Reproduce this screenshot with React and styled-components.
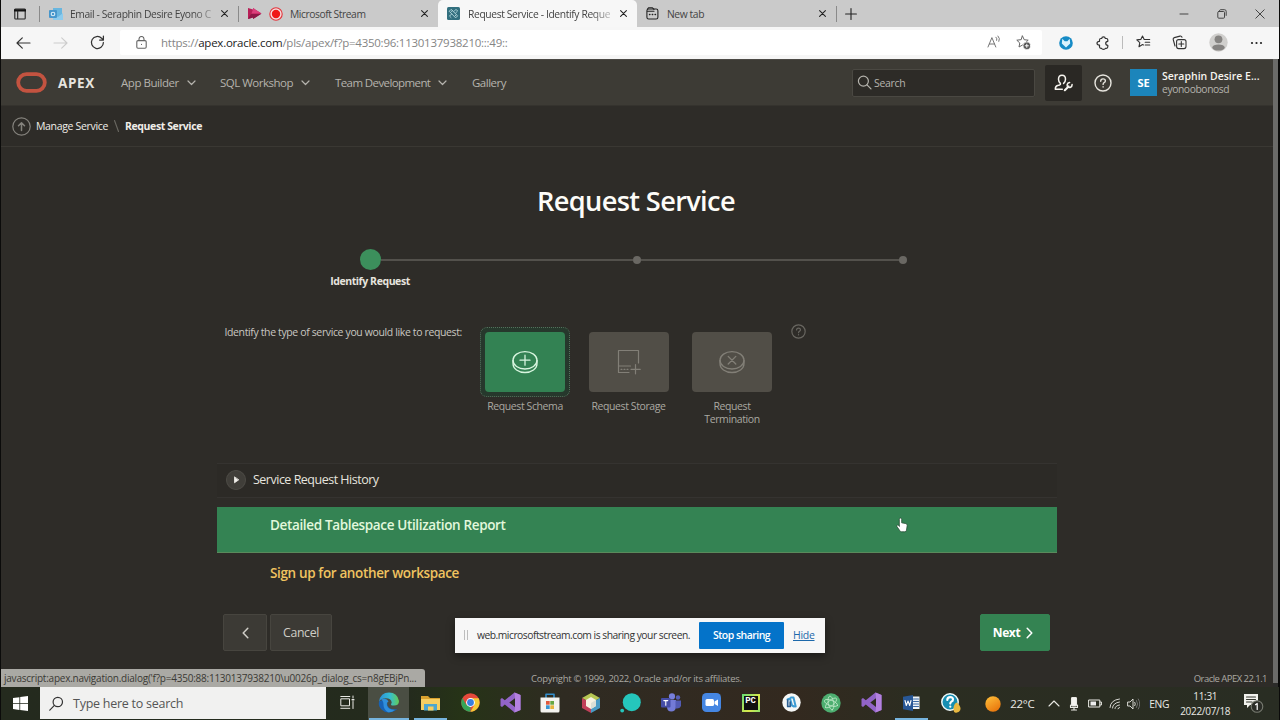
import React from "react";
import styled, { createGlobalStyle } from "styled-components";

const GlobalStyle = createGlobalStyle`
  * { box-sizing: border-box; }
  html, body { margin: 0; padding: 0; background: #000; overflow: hidden; }
  svg { display: block; flex: none; }
`;

const ui = `"Open Sans", "Noto Sans", sans-serif`;

const Screen = styled.div`
  position: relative;
  width: 1280px;
  height: 720px;
  padding: 0 1px;
  display: flex;
  flex-direction: column;
  background: #0b0b0a;
  font-family: ${ui};
  overflow: hidden;
`;

const Label = styled.span`
  display: block;
  white-space: nowrap;
  font-size: ${(p) => p.$size || 11}px;
  font-weight: ${(p) => p.$weight || 400};
  letter-spacing: ${(p) => p.$track || 0}px;
  color: ${(p) => p.$color || "inherit"};
  line-height: ${(p) => p.$line || 14}px;
`;

/* ---------- browser chrome ---------- */
const TabStrip = styled.div`
  display: flex;
  height: 27px;
  flex: none;
  background: #cacaca;
  color: #444;
`;
const TabMenu = styled.div`
  width: 38px;
  display: flex;
  align-items: center;
  padding-left: 13px;
`;
const Tab = styled.div`
  width: ${(p) => p.$width}px;
  display: flex;
  align-items: center;
  padding: 0 10px 0 9px;
  gap: ${(p) => p.$gap || 7}px;
  background: ${(p) => (p.$active ? "#f7f7f7" : "transparent")};
  border-radius: 5px 5px 0 0;
`;
const TabTitle = styled(Label)`
  flex: 1;
  min-width: 0;
  overflow: hidden;
  mask-image: ${(p) => (p.$fade ? "linear-gradient(90deg, #000 85%, rgba(0,0,0,.25))" : "none")};
`;
const Divider = styled.div`
  width: 1px;
  height: ${(p) => p.$height || 16}px;
  background: ${(p) => p.$color || "#8a8a8a"};
  align-self: center;
`;
const NewTabButton = styled.div`
  width: 28px;
  display: flex;
  align-items: center;
  justify-content: center;
`;
const WindowButtons = styled.div`
  margin-left: auto;
  display: flex;
  align-items: center;
`;
const WindowButton = styled.div`
  width: 38px;
  display: flex;
  justify-content: center;
`;
const Toolbar = styled.div`
  display: flex;
  align-items: center;
  height: 32px;
  flex: none;
  padding-bottom: 1px;
  background: #f6f6f6;
  color: #333;
`;
const NavButtons = styled.div`
  width: 119px;
  display: flex;
  align-items: center;
  padding-left: 15px;
  gap: 22px;
`;
const AddressBar = styled.div`
  width: 922px;
  height: 25px;
  display: flex;
  align-items: center;
  background: #fff;
  border-radius: 2px;
  padding: 0 11px 0 16px;
`;
const Url = styled(Label)`
  margin-left: 14px;
  flex: 1;
  color: #858585;
  b { font-weight: 400; color: #222; }
`;
const AddressActions = styled.div`
  display: flex;
  gap: 15px;
`;
const ToolbarIcon = styled.div`
  width: ${(p) => p.$width || 38}px;
  display: flex;
  justify-content: center;
`;

/* ---------- page ---------- */
const Viewport = styled.div`
  display: flex;
  flex: none;
  height: 628px;
`;
const Page = styled.div`
  width: 1272px;
  display: flex;
  flex-direction: column;
  background: #2e2c28;
  color: #e6e4df;
`;
const ScrollTrack = styled.div`
  width: 5px;
  height: 628px;
  background: #2b2b29;
`;
const ScrollThumb = styled.div`
  height: 624px;
  background: #6b6b69;
`;
const AppHeader = styled.header`
  display: flex;
  align-items: center;
  height: 47px;
  flex: none;
  background: #3d3b35;
  border-top: 1px solid #4b4945;
  border-bottom: 1px solid #35332e;
  padding-left: 15px;
`;
const Brand = styled.div`
  display: flex;
  align-items: center;
  width: 105px;
  gap: 11px;
`;
const Menu = styled.nav`
  display: flex;
  color: #b5b3ad;
`;
const MenuItem = styled.div`
  display: flex;
  align-items: center;
  justify-content: space-between;
  width: ${(p) => p.$width}px;
  margin-right: ${(p) => p.$after || 0}px;
`;
const SearchBox = styled.div`
  margin-left: auto;
  width: 183px;
  height: 28px;
  display: flex;
  align-items: center;
  gap: 2px;
  padding-left: 4px;
  border: 1px solid #4a4842;
  border-radius: 2px;
  background: #2d2b27;
  color: #b5b3ad;
`;
const AdminButton = styled.div`
  width: 37px;
  height: 36px;
  margin: 0 12px 0 10px;
  display: flex;
  align-items: center;
  justify-content: center;
  border-radius: 2px;
  background: #2a2824;
`;
const Account = styled.div`
  display: flex;
  align-items: center;
  gap: 5px;
  width: 143px;
  margin-left: 18px;
`;
const Avatar = styled.div`
  width: 27px;
  height: 27px;
  display: flex;
  align-items: center;
  justify-content: center;
  background: #1c85bb;
  color: #fff;
`;
const Breadcrumb = styled.div`
  display: flex;
  align-items: center;
  height: 41px;
  flex: none;
  border-bottom: 1px solid #3a3833;
  padding-left: 11px;
  gap: 5px;
  color: #f0eee9;
`;
const Content = styled.main`
  width: 840px;
  margin-left: 216px;
  display: flex;
  flex-direction: column;
  flex: 1;
`;
const Title = styled.h1`
  margin: 36px 2px 0 0;
  height: 36px;
  text-align: center;
  font-size: 27.2px;
  font-weight: 600;
  line-height: 36px;
  letter-spacing: -0.65px;
  color: #fdfcf8;
`;
const Progress = styled.div`
  margin: 30px 0 0 143px;
  width: 547px;
  height: 21px;
  display: flex;
  align-items: center;
`;
const Dot = styled.div`
  width: ${(p) => (p.$current ? 21 : 8)}px;
  height: ${(p) => (p.$current ? 21 : 8)}px;
  border-radius: 50%;
  background: ${(p) => (p.$current ? "#3c8f5c" : "#6a6863")};
`;
const Rail = styled.div`
  width: ${(p) => p.$width}px;
  height: 2px;
  background: #53514c;
`;
const StepLabel = styled.div`
  width: 120px;
  margin: 4px 0 0 93px;
  display: flex;
  justify-content: center;
`;
const ServiceRow = styled.div`
  display: flex;
  align-items: flex-start;
  margin-top: 39px;
  height: 136px;
`;
const ServiceLabel = styled.div`
  width: 245px;
  margin-right: 18px;
  margin-top: -2px;
  display: flex;
  justify-content: flex-end;
`;
const Options = styled.div`
  display: flex;
  gap: 13.5px;
`;
const Option = styled.div`
  width: 90px;
  display: flex;
  flex-direction: column;
  align-items: center;
  text-align: center;
  color: #aaa8a1;
`;
const OptionFrame = styled.div`
  padding: 4px;
  margin-bottom: 3px;
  border: 1px dotted ${(p) => (p.$selected ? "#55705c" : "transparent")};
  border-radius: 7px;
  background: ${(p) => (p.$selected ? "#26382c" : "transparent")};
`;
const OptionTile = styled.div`
  width: 80px;
  height: 60px;
  display: flex;
  align-items: center;
  justify-content: center;
  border-radius: 4px;
  background: ${(p) => (p.$selected ? "#338253" : "#514e47")};
  color: ${(p) => (p.$selected ? "#d8f5df" : "#827f77")};
`;
const HelpSlot = styled.div`
  margin: -3px 0 0 14px;
`;
const History = styled.section`
  height: 35px;
  display: flex;
  align-items: center;
  padding: 0 0 2px 9px;
  gap: 7px;
  border-top: 1px solid #353330;
  border-bottom: 1px solid #353330;
  background: #2c2a26;
`;
const LinkRow = styled.div`
  height: ${(p) => (p.$hover ? 46 : 47)}px;
  margin-top: ${(p) => p.$gap}px;
  padding: 9px 0 0 53px;
  background: ${(p) => (p.$hover ? "#348353" : "transparent")};
  border-bottom: ${(p) => (p.$hover ? "1px solid #5a8a5c" : "none")};
`;
const Actions = styled.div`
  display: flex;
  align-items: center;
  margin-top: 12px;
  padding: 0 7px 0 6px;
  gap: 3px;
`;
const Button = styled.div`
  width: ${(p) => p.$width}px;
  height: 37px;
  margin-left: ${(p) => (p.$primary ? "auto" : "0")};
  padding: ${(p) => (p.$primary ? "0 4px 0 0" : "0")};
  display: flex;
  align-items: center;
  justify-content: center;
  gap: 6px;
  border-radius: 2px;
  border: 1px solid ${(p) => (p.$primary ? "#348352" : "#47453f")};
  background: ${(p) => (p.$primary ? "#348352" : "#3c3a35")};
  color: ${(p) => (p.$primary ? "#fff" : "#cfcdc7")};
`;
const Footer = styled.footer`
  height: 19px;
  flex: none;
  display: flex;
  justify-content: space-between;
  padding: 4px 6px 0 530px;
  color: #aaa8a2;
`;

/* ---------- overlays ---------- */
const ShareBar = styled.div`
  position: absolute;
  left: 455px;
  top: 618px;
  width: 370px;
  height: 35px;
  display: flex;
  align-items: center;
  padding: 0 0 1px 9px;
  background: #f7f7f7;
  color: #333;
  box-shadow: 0 3px 8px rgba(0, 0, 0, 0.4);
`;
const Grip = styled.div`
  width: 4px;
  height: 10px;
  margin-right: 9px;
  border: solid #bdbdbd;
  border-width: 0 1px;
`;
const ShareText = styled.div`
  width: 222px;
`;
const StopButton = styled.div`
  width: 85px;
  height: 27px;
  margin-right: 9px;
  display: flex;
  align-items: center;
  justify-content: center;
  border-radius: 1px;
  background: #0473c9;
  color: #fff;
`;
const HideLink = styled(Label)`
  text-decoration: underline;
  color: #1d69ab;
`;
const StatusBubble = styled.div`
  position: absolute;
  left: 1px;
  top: 669px;
  width: 424px;
  height: 18px;
  display: flex;
  align-items: center;
  padding-left: 3px;
  border-radius: 0 3px 0 0;
  background: #aaa9a4;
  color: #3a3934;
`;
const Pointer = styled.div`
  position: absolute;
  left: 896px;
  top: 517px;
`;

/* ---------- taskbar ---------- */
const Taskbar = styled.div`
  display: flex;
  height: 33px;
  flex: none;
  background: linear-gradient(90deg, #242a1e 0%, #242b1d 32%, #263317 36%, #2f2b22 44%, #33291f 62%, #2b2d21 72%, #292d23 100%);
  color: #e9e9e4;
`;
const StartCell = styled.div`
  width: 39px;
  display: flex;
  align-items: center;
  padding-left: 12px;
`;
const TaskSearch = styled.div`
  width: 286px;
  height: 32px;
  display: flex;
  align-items: center;
  padding: 1px 0 0 9px;
  gap: 9px;
  background: #f1f1f0;
  color: #555;
`;
const TaskApp = styled.div`
  width: ${(p) => p.$width || 40.1}px;
  height: 33px;
  display: flex;
  align-items: center;
  justify-content: center;
  padding-left: ${(p) => p.$shift || 0}px;
  background: ${(p) => (p.$active ? "#4a4e43" : "transparent")};
`;
const TaskAppInner = styled.div`
  width: ${(p) => (p.$active ? 40 : 33)}px;
  height: 33px;
  display: flex;
  align-items: center;
  justify-content: center;
  border-bottom: 2px solid ${(p) => (p.$open ? "#76b4de" : "transparent")};
`;
const Tray = styled.div`
  flex: 1;
  display: flex;
  align-items: center;
  padding-left: 14px;
`;
const TrayItem = styled.div`
  width: ${(p) => p.$width}px;
  display: flex;
`;
const Clock = styled.div`
  width: 56px;
  display: flex;
  flex-direction: column;
  align-items: center;
  margin-left: 6px;
`;
const Notice = styled.div`
  margin-left: 11px;
`;

/* ---------- drawings ---------- */
const Svg = ({ w = 16, h = w, box = "0 0 16 16", sw = 1.1, children }) => (
  <svg width={w} height={h} viewBox={box} fill="none" stroke="currentColor" strokeWidth={sw} strokeLinecap="round" strokeLinejoin="round">
    {children}
  </svg>
);
const CloseX = () => <Svg w={7} box="0 0 7 7" sw={1.1}><path d="M.6.6 6.4 6.4M6.4.6.6 6.4" stroke="#222" /></Svg>;
const Chevron = () => <Svg w={9} h={6} box="0 0 9 6" sw={1.2}><path d="m1 1 3.5 3.5L8 1" /></Svg>;
const Vertical = () => (
  <Svg w={12} box="0 0 12 12"><rect x=".8" y="1" width="10.4" height="10" rx=".8" stroke="#222" /><path d="M1 2.4h10" stroke="#111" strokeWidth="2.4" /><path d="M3.7 3v7.5" stroke="#222" /></Svg>
);
const OutlookLogo = () => (
  <Svg w={14} h={12} box="0 0 14 12"><g stroke="none"><rect x="4" y="0" width="9" height="9" fill="#69b6df" /><path d="M4 6 9 9l5-4v7H4z" fill="#8dcbed" /><rect y="2" width="8" height="8" rx="1" fill="#4796cb" /></g><circle cx="4" cy="6" r="1.8" stroke="#d9edf8" /></Svg>
);
const StreamLogo = () => (
  <Svg w={14} h={13} box="0 0 14 13"><g stroke="none"><path d="M0 1 5 2.500V1L13.500 6.500 5 12V10.500L0 12z" fill="#b81f57" /><path d="M5 1 13.500 6.500H3.500L5 2.500z" fill="#dc3f7c" /><path d="M0 12 3 7h10L5 12v-1.500z" fill="#8e1747" /></g></Svg>
);
const RecordDot = () => <Svg w={14} box="0 0 14 14"><circle cx="7" cy="7" r="6.2" stroke="#e3333a" fill="#f4dcdc" /><circle cx="7" cy="7" r="4.2" stroke="none" fill="#f01616" /></Svg>;
const ApexFavicon = () => (
  <Svg w={13} box="0 0 13 13" sw={0.9}><rect width="13" height="13" rx="1.5" fill="#326f7e" stroke="none" /><path d="m2.5 4 1.6-1.6 6.5 6.4-1.7 1.8zM4 10.5l-1.5-1.4 2-2M8.6 6l2-2L9 2.4l-2 2M4.5 4.5l1-1M8 9l1-1" stroke="#b9dbe0" /></Svg>
);
const NewTabIcon = () => <Svg w={13} box="0 0 13 13"><rect x=".9" y="2" width="11" height="10" rx="1.8" stroke="#222" /><path d="M1.5 2 2.5.8h4L8 2.4M8 4.200H1.500" stroke="#222" /><path d="M3.5 7.500h.4M6.3 7.500h.4M9.1 7.500h.4" stroke="#222" strokeWidth="1.4" /></Svg>;
const PlusIcon = () => <Svg w={12} box="0 0 12 12"><path d="M6 .6v10.8M.6 6h10.8" stroke="#222" /></Svg>;
const Back = () => <Svg w={15} h={12} box="0 0 15 12" sw={1.2}><path d="M14 6H1M6.3.9 1 6l5.3 5.1" /></Svg>;
const Forward = () => <Svg w={15} h={12} box="0 0 15 12" sw={1.1}><path d="M1 6h13M8.7.9 14 6l-5.3 5.1" stroke="#ccc" /></Svg>;
const Reload = () => <Svg w={15} box="0 0 15 15" sw={1.25}><path d="M13.400 7.500A6 6 0 1 1 11.600 3.200L13.200 5M13.400 1v4H9.600" /></Svg>;
const LockIcon = () => <Svg w={11} h={13} box="0 0 11 13"><rect x=".8" y="4.6" width="9.4" height="7.6" rx="1.2" stroke="#666" /><path d="M3 4.5V3a2.5 2.5 0 0 1 5 0v1.5M5.5 8.2v.3" stroke="#666" /></Svg>;
const ReadAloud = () => <Svg w={14} box="0 0 14 14" sw={1}><path d="M1 12 4.9 2.6 8.8 12M2.3 9h5.2M9 2.2q1.6 1.5.7 3.2M11 1q2.5 2.5.9 5.4" stroke="#777" /></Svg>;
const starPath = "M6.5 1 8.2 4.7l4 .5-3 2.8.8 4-3.5-2L3 12l.8-4-3-2.8 4-.5z";
const StarAdd = () => <Svg w={15} box="0 0 15 15" sw={1}><path d={starPath} stroke="#666" /><circle cx="10.8" cy="10.8" r="3.7" fill="#555" stroke="#fff" strokeWidth=".6" /><path d="M9.2 10.8h3.2M10.8 9.2v3.2" stroke="#fff" /></Svg>;
const FoxBadge = () => <Svg w={14} box="0 0 14 14"><circle cx="7" cy="7" r="6.8" fill="#168bc6" stroke="none" /><path d="M3.300 2.800 5.700 5.200h2.600l2.400-2.400.5 4.700L7 11.500 2.800 7.500z" fill="#d9f3fd" stroke="none" /></Svg>;
const Puzzle = () => <Svg w={14} box="0 0 14 14" sw={1.2}><path d="M11.800 5.300V3.900q0-1.400-1.400-1.400H9.300Q9.200.8 7.500.8T5.700 2.500H4.900q-1.400 0-1.400 1.400v1.400Q1 5.400 1 7.200t2.500 1.900v1.700q0 1.500 1.400 1.500h.8q.2 1 1.800 1t1.800-1h1.100q1.400 0 1.400-1.500V9.300Q9.700 9.200 9.700 7.300t2.100-2z" /></Svg>;
const Favorites = () => <Svg w={15} box="0 0 15 15" sw={1.1}><path d="m7.5 10-1-.5L3 11.7l.8-4-3-2.8 4-.5L6.5 1l1.7 3.5h5.5M9.2 7.3h4.5M9.2 10h4.5" /></Svg>;
const Collections = () => <Svg w={15} box="0 0 15 15" sw={1.1}><rect x="4.6" y="4.6" width="9.4" height="9" rx="2" /><path d="M9.3 6.5v5M6.8 9h5M3 11 1.2 4.5Q.9 3 2.3 2.6L8 1.1q1.5-.3 2 1.1" /></Svg>;
const Person = () => <Svg w={19} box="0 0 19 19"><circle cx="9.5" cy="9.5" r="9.2" fill="#d0cfcd" stroke="none" /><circle cx="9.5" cy="6.3" r="3.9" fill="#858381" stroke="none" /><ellipse cx="9.5" cy="14.5" rx="6.2" ry="3.1" fill="#858381" stroke="none" /></Svg>;
const More = () => <Svg w={13} h={4} box="0 0 13 4"><g fill="#222" stroke="none"><circle cx="2" cy="2" r="1.1" /><circle cx="6.5" cy="2" r="1.1" /><circle cx="11" cy="2" r="1.1" /></g></Svg>;
const OracleLogo = () => <Svg w={31} h={21} box="0 0 31 21"><rect x="2.2" y="2.2" width="26.6" height="16.6" rx="8.3" stroke="#c35340" strokeWidth="3.8" /></Svg>;
const Magnifier = () => <Svg w={15} box="0 0 15 15" sw={1.2}><circle cx="6.4" cy="6.1" r="5" /><path d="m10 9.8 4 4" /></Svg>;
const AdminIcon = () => (
  <Svg w={19} h={18} box="0 0 19 18" sw={1.5}>
    <path d="M9.600 9.400q1.900-1.600 1.900-4.100 0-4-3.500-4T4.500 5.300q0 2.500 1.900 4.100v.9q-.6.9-2.800 1.200-2.300.6-2.300 3.700h7" stroke="#f7f5ef" />
    <path d="m10.800 16.200 3.800-3.800" stroke="#f7f5ef" strokeWidth="2.100" />
    <path d="M15.600 8.600q-2 .2-2.400 1.900t.8 2.500 2.600.3 1.500-2.700" stroke="#f7f5ef" strokeWidth="1.500" />
  </Svg>
);
const Question = ({ size = 18, color = "#e7e5de", sw = 1.4 }) => <Svg w={size} box="0 0 18 18" sw={sw}><circle cx="9" cy="9" r="8" stroke={color} /><path d="M6.7 7.2q0-2.3 2.3-2.3t2.4 1.9q0 1.2-1.3 1.8-1 .5-1 1.8M9.1 12.8v.2" stroke={color} /></Svg>;
const UpCircle = () => <Svg w={19} box="0 0 19 19" sw={1.2}><circle cx="9.5" cy="9.5" r="8.7" stroke="#85837d" /><path d="M9.5 13.5V6M6.5 8.7l3-3 3 3" stroke="#85837d" strokeWidth="1.5" /></Svg>;
const Slash = () => <Svg w={7} h={14} box="0 0 7 14"><path d="m1.500 1.500 4 11" stroke="#6a6862" /></Svg>;
const Disc = ({ x }) => (
  <Svg w={26} h={24} box="0 0 26 24" sw={1.3}><ellipse cx="13" cy="10.3" rx="12" ry="8.7" /><path d="M1 10.3v3.4c0 4.9 5.3 8.8 12 8.8s12-3.9 12-8.8v-3.4" />{x ? <path d="m9.2 6.4 7.6 7.6m0-7.6L9.2 14" /> : <path d="M13 5.2v10M8 10.2h10" />}</Svg>
);
const Storage = () => <Svg w={24} h={26} box="0 0 24 26" sw={1.2}><path d="M21.5 14V1.5H1.5v22H12M1.5 17h12M4 20.3h1M7 20.3h1M10 20.3h1M18.5 15.5v9.3M14 20.3h9.3" /></Svg>;
const PlayCircle = () => <Svg w={20} box="0 0 20 20"><circle cx="10" cy="10" r="9.5" fill="#403e39" stroke="#4a4843" /><path d="M8.500 7.200v5.600l4-2.800z" fill="#f1efea" stroke="#f1efea" strokeWidth=".8" /></Svg>;
const Angle = ({ left }) => <Svg w={7} h={12} box="0 0 7 12" sw={1.5}><path d={left ? "M5.8 1.2 1.2 6l4.6 4.8" : "M1.2 1.2 5.8 6l-4.6 4.8"} /></Svg>;
const Hand = () => <Svg w={12} h={16} box="0 0 12 16"><path d="M3.3 9V2.3q.1-1.3 1.2-1.3t1.2 1.3v3.5l4.2.8q1.5.4 1.3 2l-.7 4.6q-.3 1.6-1.7 1.6H5.5q-1 0-1.8-1.3L1 9.7Q.4 8.4 1.3 8q.9-.2 2 1z" fill="#fff" stroke="#254d34" strokeWidth=".8" /></Svg>;

/* taskbar marks */
const WindowsLogo = () => <Svg w={15} box="0 0 15 15"><path d="M0 2 6.4 1.2v6H0zM7.2 1 15 0v7.2H7.2zM0 7.9h6.4v6L0 13zM7.2 7.9H15V15l-7.8-1z" fill="#fff" stroke="none" /></Svg>;
const TaskSearchIcon = () => <Svg w={15} box="0 0 15 15" sw={1.2}><circle cx="8.8" cy="6" r="4.7" stroke="#333" /><path d="m5.4 9.4-4.6 4.8" stroke="#333" /></Svg>;
const TaskView = () => <Svg w={15} box="0 0 15 15" sw={1}><path d="M1.2 3.8h8.3v7H1.2zM.8 1.5h9M.8 13.3h9M13 1v2M13 6.5v7" /><path d="M12.2 4.7h1.6" strokeWidth="1.6" /></Svg>;
const Edge = () => (
  <Svg w={22} h={21} box="0 0 22 21">
    <defs>
      <linearGradient id="edgeTop" x1="0" x2="1"><stop stopColor="#2a8fd8" /><stop offset=".55" stopColor="#36bdd0" /><stop offset="1" stopColor="#63cc55" /></linearGradient>
    </defs>
    <g stroke="none">
      <path d="M1 9.500Q0 14 3.500 17.500T12 20.500q4.500-.4 7.500-3.700-4.500 1.700-8-.8-2.600-2-2.300-5Q6 6.500 1 9.500z" fill="#1762b5" />
      <path d="M3 7.500Q9 5.500 10.500 9.500 8.300 10.500 9 13.500q1.500 4.500 8 4.300-3 2.900-7 2.500Q5.500 17.500 5.500 13T3 7.500z" fill="#2f8fdc" />
      <path d="M1 9.500Q2.500.6 11 .5q8.500.2 10 8.500 0 4.500-5 4.600-3 0-3-1.200c0-.7.7-.9.700-2.200Q13 6.500 8 6.300 3.500 6.300 1 9.500z" fill="url(#edgeTop)" />
    </g>
  </Svg>
);
const Folder = () => <Svg w={19} h={16} box="0 0 19 16"><g stroke="none"><path d="M0 1h7l2 2h10v12H0z" fill="#d9a22f" /><path d="M0 4h19v11H0z" fill="#f6ce62" /><path d="M3 9h13v6.5H3z" fill="#4ca6cf" /><path d="M7 11.500h5.500v4H7z" fill="#f6ce62" /></g></Svg>;
const Chrome = () => <Svg w={19} box="0 0 19 19"><g stroke="none"><circle cx="9.5" cy="9.5" r="9.3" fill="#e5493b" /><path d="M1.4 4.9 5.500 12l4 0 0 6.800A9.3 9.3 0 0 1 1.4 4.900z" fill="#36a558" /><path d="M9.5 5.3h8.1A9.3 9.3 0 0 1 9.5 18.800L13.3 12z" fill="#f6ca36" /><circle cx="9.5" cy="9.5" r="4.4" fill="#fff" /><circle cx="9.5" cy="9.5" r="3.4" fill="#397fe1" /></g></Svg>;
const VisualStudio = () => <Svg w={21} box="0 0 21 21"><g stroke="none"><path d="M14.5.5 20.5 3v15l-6 2.5L4.8 12.4 2 15 .5 14V7L2 6l2.8 2.3zM15 6.2 9.3 10.5 15 15z" fill="#9264c7" fillRule="evenodd" /><path d="m14.5.5 6 2.5v15l-6 2.5.5-5.5V6z" fill="#b481df" /></g></Svg>;
const Store = () => <Svg w={20} h={20} box="0 0 20 20"><path d="M6 5V1.2h8V5" stroke="#338ecb" strokeWidth="1.6" /><path d="M.5 4.500h19V18q0 1.500-1.500 1.500H2Q.5 19.500.5 18z" fill="#f4f3ef" stroke="none" /><g stroke="none"><rect x="6" y="8" width="3.7" height="3.7" fill="#df593b" /><rect x="10.3" y="8" width="3.7" height="3.7" fill="#67a743" /><rect x="6" y="12.3" width="3.7" height="3.7" fill="#3695d2" /><rect x="10.3" y="12.3" width="3.7" height="3.7" fill="#e7b43d" /></g></Svg>;
const NetBeans = () => <Svg w={20} box="0 0 20 20"><g stroke="none"><path d="m10 0 9 5-9 5-9-5z" fill="#b6c653" /><path d="m1 5 9 5v10l-9-5z" fill="#c04059" /><path d="m19 5-9 5v10l9-5z" fill="#4a9bc4" /><path d="m10 4 5 3v6l-5 3-5-3V7z" fill="#f6f2e3" /><path d="m10 10 5-3v6l-5 3z" fill="#dadfd6" /></g></Svg>;
const TealBubble = () => <Svg w={21} h={20} box="0 0 21 20"><g fill="#25c6bc" stroke="none"><circle cx="11.8" cy="9.2" r="9" /><circle cx="2.2" cy="17.6" r="1.9" /></g></Svg>;
const Teams = () => <Svg w={20} h={19} box="0 0 20 19"><g stroke="none"><circle cx="11" cy="3.4" r="3.1" fill="#777fdc" /><circle cx="17" cy="4.5" r="2.2" fill="#555eb5" /><path d="M6 7h9v7q-.6 4.500-4.700 4.500T6 14z" fill="#737bd6" /><path d="M14.500 7.500H20v5q-.500 3.500-5.500 3z" fill="#525bb3" /><rect y="5" width="9.500" height="9.500" rx="1" fill="#454da6" /></g><path d="M2.800 7.600h4M4.800 7.600v4.600" stroke="#fff" /></Svg>;
const Zoom = () => <Svg w={19} box="0 0 19 19"><g stroke="none"><rect width="19" height="19" rx="4.500" fill="#4586e2" /><rect x="3.500" y="6" width="8.500" height="7" rx="1.500" fill="#fff" /><path d="m12.500 8.500 3.500-2v6.500l-3.500-2z" fill="#fff" /></g></Svg>;
const PyFrame = styled.div`
  width: 18px;
  height: 18px;
  padding: 2px;
  background: linear-gradient(125deg, #62dc74, #dce84b 60%, #8de36c);
`;
const PyFace = styled.div`
  height: 14px;
  padding-left: 1px;
  background: #101010;
  color: #fff;
  font: 700 9px/10px "Liberation Mono", monospace;
`;
const PyCharm = () => <PyFrame><PyFace>PC</PyFace></PyFrame>;
const AndroidStudio = () => <Svg w={19} box="0 0 19 19"><circle cx="9.500" cy="9.500" r="9.200" fill="#f5f7f6" stroke="none" /><path d="M5.500 6.500 8 5.500l2 7 2 1M9 4.500h2.500l2.200 9" stroke="#3c9bd3" strokeWidth="2" /><path d="M5.700 7v6.500h2.500V9" stroke="#2c5f92" strokeWidth="1.700" /></Svg>;
const Atom = () => <Svg w={20} box="0 0 20 20" sw={0.8}><circle cx="10" cy="10" r="9.700" fill="#4dae70" stroke="none" /><g stroke="#bfe8c9"><ellipse cx="10" cy="10" rx="7" ry="2.700" transform="rotate(20 10 10)" /><ellipse cx="10" cy="10" rx="7" ry="2.700" transform="rotate(80 10 10)" /><ellipse cx="10" cy="10" rx="7" ry="2.700" transform="rotate(140 10 10)" /></g></Svg>;
const Word = () => <Svg w={17} h={16} box="0 0 17 16"><rect x="7" y="1.500" width="9.500" height="12.500" fill="#eef3f8" stroke="none" /><path d="M10.500 4h5M10.500 6.500h5M10.500 9h5M10.500 11.500h5" stroke="#3968a4" /><path d="m0 1.800 10-1.800v16L0 14.200z" fill="#285796" stroke="none" /><path d="m2 5.500 1.300 5L5 6l1.700 4.500L8 5.500" stroke="#fff" /></Svg>;
const HelpApp = () => <Svg w={20} box="0 0 20 20"><circle cx="9" cy="9" r="8.200" fill="#168eb2" stroke="#eef8f8" strokeWidth="1.500" /><path d="M6.300 7q0-2.900 2.900-2.900T12 6.600q0 1.500-1.800 2.200-.9.600-.9 1.800M9.300 13.500v.2" stroke="#fff" strokeWidth="2.200" /><path d="M16 9.500q3.500 3.500 3.500 6.200T16 19.500t-3.500-3.800T16 9.500z" fill="#e8b841" stroke="none" /></Svg>;
const Sun = () => <Svg w={16} box="0 0 16 16"><defs><linearGradient id="sun" x1="0" x2=".6" y2="1"><stop stopColor="#ffc13b" /><stop offset="1" stopColor="#e9780e" /></linearGradient></defs><circle cx="8" cy="8" r="7.700" fill="url(#sun)" stroke="none" /></Svg>;
const TrayUp = () => <Svg w={12} h={7} box="0 0 12 7" sw={1.100}><path d="m1 6 5-5 5 5" /></Svg>;
const Mic = () => <Svg w={10} h={14} box="0 0 10 14"><rect x="2.500" y=".500" width="5" height="8.500" rx="1" fill="#f4f4f0" /><path d="M1.500 8v2.500h7V8M5 10.500v2.500M2.500 13h5" /></Svg>;
const Battery = () => <Svg w={14} h={9} box="0 0 14 9" sw={1}><path d="M1 1h10.800v7H1zM12 3h1.400v3H12" /><path d="M2.500 2.500H8v4H2.500z" fill="#eee" stroke="none" /></Svg>;
const Wifi = () => <Svg w={12} box="0 0 12 12" sw={0.900}><path d="M1 9.500Q1.500 2 10.500 1M3.500 10q.3-5 7-6M6 10.500q.4-3 4.500-3.500M9 10.800q.2-1.100 1.500-1.300" /></Svg>;
const Speaker = () => <Svg w={13} h={12} box="0 0 13 12" sw={0.900}><path d="M1 4h2l3-3v10L3 8H1zM7.800 4.300q1.200 1.700 0 3.400" /><path d="M9.500 2.500q2.400 3.500 0 7M11.300 1q3 5 0 10" stroke="#777" /></Svg>;
const NoticeIcon = () => <Svg w={20} h={21} box="0 0 20 21"><path d="M0 1h14v11H6l-3 3v-3H0z" fill="#f1f1ed" stroke="none" /><path d="M2.500 4h9M2.500 6.500h9M2.500 9H8" stroke="#34372e" /><circle cx="13" cy="13.500" r="5.800" fill="#2b2d27" stroke="#777a70" /><path d="m11.500 11.700 1.700-1.200v6" stroke="#fff" strokeWidth="1.200" /></Svg>;

const apps = [
  { Icon: TaskView, width: 42 },
  { Icon: Edge, width: 41, active: true, open: true },
  { Icon: Folder, width: 41, shift: 1, open: true },
  { Icon: Chrome }, { Icon: VisualStudio, shift: 1 }, { Icon: Store }, { Icon: NetBeans, shift: 1 }, { Icon: TealBubble },
  { Icon: Teams }, { Icon: Zoom, shift: 1 }, { Icon: PyCharm, shift: 1 }, { Icon: AndroidStudio, shift: 1 }, { Icon: Atom, shift: 1 },
  { Icon: VisualStudio, shift: 1 }, { Icon: Word, shift: 1, open: true }, { Icon: HelpApp },
];

function BrowserChrome() {
  return (
    <>
      <TabStrip>
        <TabMenu><Vertical /></TabMenu>
        <Divider />
        <Tab $width={198}>
          <OutlookLogo />
          <TabTitle $size={10.3} $track={-0.38} $fade>Email - Seraphin Desire Eyono C</TabTitle>
          <CloseX />
        </Tab>
        <Divider />
        <Tab $width={199}>
          <StreamLogo /><RecordDot />
          <TabTitle $size={10.3} $track={-0.45}>Microsoft Stream</TabTitle>
          <CloseX />
        </Tab>
        <Tab $width={199} $gap={8} $active>
          <ApexFavicon />
          <TabTitle $size={10.3} $track={-0.37} $fade>Request Service - Identify Reque</TabTitle>
          <CloseX />
        </Tab>
        <Tab $width={199} $gap={8}>
          <NewTabIcon />
          <TabTitle $size={10.3} $track={-0.4}>New tab</TabTitle>
          <CloseX />
        </Tab>
        <Divider />
        <NewTabButton><PlusIcon /></NewTabButton>
        <WindowButtons>
          <WindowButton><Svg w={10} box="0 0 10 10" sw={1}><path d="M1 5h8" /></Svg></WindowButton>
          <WindowButton><Svg w={10} box="0 0 10 10" sw={1}><rect x=".8" y="2.500" width="6.700" height="6.700" rx="1" /><path d="M2.500 1.500q.3-.8 1-.8h4q1.700 0 1.700 1.700v4" /></Svg></WindowButton>
          <WindowButton><Svg w={10} box="0 0 10 10" sw={1}><path d="m.8.8 8.400 8.400m0-8.400L.8 9.200" /></Svg></WindowButton>
        </WindowButtons>
      </TabStrip>
      <Toolbar>
        <NavButtons><Back /><Forward /><Reload /></NavButtons>
        <AddressBar>
          <LockIcon />
          <Url $size={11.5} $track={-0.25}>https://<b>apex.oracle.com</b>/pls/apex/f?p=4350:96:1130137938210:::49::</Url>
          <AddressActions><ReadAloud /><StarAdd /></AddressActions>
        </AddressBar>
        <ToolbarIcon $width={47}><FoxBadge /></ToolbarIcon>
        <ToolbarIcon $width={28}><Puzzle /></ToolbarIcon>
        <ToolbarIcon $width={11}><Divider $height={13} $color="#bbb" /></ToolbarIcon>
        <ToolbarIcon $width={30}><Favorites /></ToolbarIcon>
        <ToolbarIcon $width={43}><Collections /></ToolbarIcon>
        <ToolbarIcon $width={34}><Person /></ToolbarIcon>
        <ToolbarIcon $width={43}><More /></ToolbarIcon>
      </Toolbar>
    </>
  );
}

function Header() {
  return (
    <AppHeader>
      <Brand><OracleLogo /><Label $size={13.5} $weight={700} $track={0.6}>APEX</Label></Brand>
      <Menu>
        <MenuItem $width={75} $after={24}><Label $size={11.5} $track={-0.45}>App Builder</Label><Chevron /></MenuItem>
        <MenuItem $width={90} $after={25}><Label $size={11.5} $track={-0.5}>SQL Workshop</Label><Chevron /></MenuItem>
        <MenuItem $width={112} $after={25}><Label $size={11.5} $track={-0.6}>Team Development</Label><Chevron /></MenuItem>
        <MenuItem $width={40}><Label $size={11.5} $track={-0.5}>Gallery</Label></MenuItem>
      </Menu>
      <SearchBox><Magnifier /><Label $size={10.5} $track={-0.3}>Search</Label></SearchBox>
      <AdminButton><AdminIcon /></AdminButton>
      <Question />
      <Account>
        <Avatar><Label $size={11} $weight={700}>SE</Label></Avatar>
        <div>
          <Label $size={10.5} $weight={600} $color="#f6f4ef">Seraphin Desire E...</Label>
          <Label $size={10.3} $track={-0.4} $color="#b5b3ad" $line={13}>eyonoobonosd</Label>
        </div>
      </Account>
    </AppHeader>
  );
}

const services = [
  { lines: ["Request Schema"], icon: <Disc />, selected: true },
  { lines: ["Request Storage"], icon: <Storage /> },
  { lines: ["Request", "Termination"], icon: <Disc x /> },
];

function Wizard() {
  return (
    <Content>
      <Title>Request Service</Title>
      <Progress><Dot $current /><Rail $width={251.5} /><Dot /><Rail $width={258.5} /><Dot /></Progress>
      <StepLabel><Label $size={10.5} $weight={700} $track={-0.42}>Identify Request</Label></StepLabel>
      <ServiceRow>
        <ServiceLabel><Label $size={10.5} $track={-0.37} $color="#c9c7c1">Identify the type of service you would like to request:</Label></ServiceLabel>
        <Options>
          {services.map((s) => (
            <Option key={s.lines.join(" ")}>
              <OptionFrame $selected={s.selected}><OptionTile $selected={s.selected}>{s.icon}</OptionTile></OptionFrame>
              {s.lines.map((t) => <Label key={t} $size={10.5} $track={-0.4} $line={13.4}>{t}</Label>)}
            </Option>
          ))}
        </Options>
        <HelpSlot><Question size={15} color="#696761" sw={1.4} /></HelpSlot>
      </ServiceRow>
      <History><PlayCircle /><Label $size={12.5} $track={-0.5}>Service Request History</Label></History>
      <LinkRow $gap={9} $hover><Label $size={13.5} $weight={600} $track={-0.35} $line={18} $color="#e2f8dc">Detailed Tablespace Utilization Report</Label></LinkRow>
      <LinkRow $gap={2}><Label $size={13.5} $weight={600} $track={-0.36} $line={18} $color="#f0c360">Sign up for another workspace</Label></LinkRow>
      <Actions>
        <Button $width={44}><Angle left /></Button>
        <Button $width={62}><Label $size={12.3} $track={-0.35}>Cancel</Label></Button>
        <Button $width={70} $primary><Label $size={12} $weight={700} $track={-0.4}>Next</Label><Angle /></Button>
      </Actions>
    </Content>
  );
}

function DesktopBar() {
  return (
    <Taskbar>
      <StartCell><WindowsLogo /></StartCell>
      <TaskSearch><TaskSearchIcon /><Label $size={12.5} $track={-0.25} $line={18}>Type here to search</Label></TaskSearch>
      {apps.map(({ Icon, width, shift, active, open }, i) => (
        <TaskApp key={i} $active={active} $width={width} $shift={shift}>
          <TaskAppInner $open={open} $active={active}><Icon /></TaskAppInner>
        </TaskApp>
      ))}
      <Tray>
        <TrayItem $width={25}><Sun /></TrayItem>
        <TrayItem $width={38}><Label $size={11.5} $track={-0.3}>22°C</Label></TrayItem>
        <TrayItem $width={21}><TrayUp /></TrayItem>
        <TrayItem $width={19}><Mic /></TrayItem>
        <TrayItem $width={21}><Battery /></TrayItem>
        <TrayItem $width={18}><Wifi /></TrayItem>
        <TrayItem $width={22}><Speaker /></TrayItem>
        <TrayItem $width={22}><Label $size={10.3} $track={-0.4}>ENG</Label></TrayItem>
        <Clock><Label $size={10} $line={15} $track={-0.3}>11:31</Label><Label $size={10} $line={15} $track={-0.3}>2022/07/18</Label></Clock>
        <Notice><NoticeIcon /></Notice>
      </Tray>
    </Taskbar>
  );
}

export default function App() {
  return (
    <Screen>
      <GlobalStyle />
      <BrowserChrome />
      <Viewport>
        <Page>
          <Header />
          <Breadcrumb>
            <UpCircle /><Label $size={10.5} $track={-0.33}>Manage Service</Label><Slash /><Label $size={10.5} $weight={700} $track={-0.4}>Request Service</Label>
          </Breadcrumb>
          <Wizard />
          <Footer>
            <Label $size={9.5} $track={-0.28}>Copyright © 1999, 2022, Oracle and/or its affiliates.</Label>
            <Label $size={9.5} $track={-0.54}>Oracle APEX 22.1.1</Label>
          </Footer>
        </Page>
        <ScrollTrack><ScrollThumb /></ScrollTrack>
      </Viewport>
      <DesktopBar />
      <ShareBar>
        <Grip />
        <ShareText><Label $size={10.3} $track={-0.49}>web.microsoftstream.com is sharing your screen.</Label></ShareText>
        <StopButton><Label $size={10.5} $weight={600} $track={-0.52}>Stop sharing</Label></StopButton>
        <HideLink $size={10.5} $track={-0.3}>Hide</HideLink>
      </ShareBar>
      <StatusBubble><Label $size={10} $track={-0.23}>{"javascript:apex.navigation.dialog('f?p=4350:88:1130137938210\\u0026p_dialog_cs=n8gEBjPn..."}</Label></StatusBubble>
      <Pointer><Hand /></Pointer>
    </Screen>
  );
}
